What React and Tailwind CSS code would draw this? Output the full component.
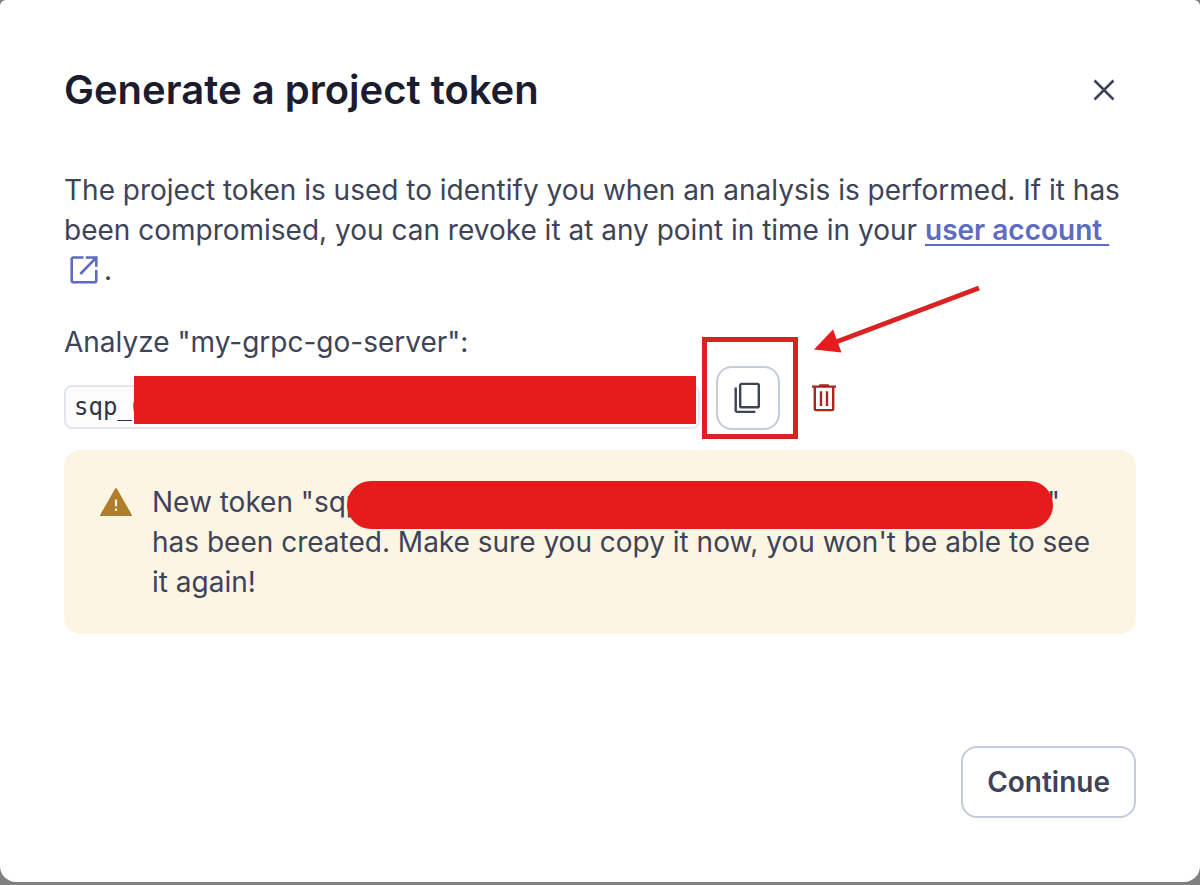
import React, { useState } from "react";

const CloseIcon = () => (
  <svg className="size-8" viewBox="0 0 32 32" fill="none" aria-hidden="true">
    <path d="M6.5 6.5l19 19M25.5 6.5l-19 19" stroke="currentColor" strokeWidth="2.5" />
  </svg>
);

const ExternalIcon = () => (
  <svg
    className="inline-block size-10 align-top"
    viewBox="0 0 40 40"
    fill="none"
    aria-hidden="true"
  >
    <path
      d="M19.5 7.5H9.5a1.8 1.8 0 0 0-1.8 1.8v21.2a1.8 1.8 0 0 0 1.8 1.8h21a1.8 1.8 0 0 0 1.8-1.8V20"
      stroke="currentColor"
      strokeWidth="2.6"
    />
    <path
      d="M21.8 7.5h10.5v9.2M32 7.8L16.3 24"
      stroke="currentColor"
      strokeWidth="2.6"
    />
  </svg>
);

const CopyIcon = () => (
  <svg className="size-8" viewBox="0 0 32 32" fill="none" aria-hidden="true">
    <rect x="8.2" y="1.9" width="18.6" height="23.4" rx="1.4" stroke="currentColor" strokeWidth="2.4" />
    <path
      d="M3.7 5.5v23a1.4 1.4 0 0 0 1.4 1.4h18.2"
      stroke="currentColor"
      strokeWidth="2.4"
    />
  </svg>
);

const TrashIcon = () => (
  <svg className="size-8" viewBox="0 0 32 32" fill="none" aria-hidden="true">
    <path
      d="M4 4.6h24M11.2 3.4h9.6M6.8 4.6v22.2a1.3 1.3 0 0 0 1.3 1.3h15.8a1.3 1.3 0 0 0 1.3-1.3V4.6M13 9.3v14.7M19 9.3v14.7"
      stroke="currentColor"
      strokeWidth="2.4"
    />
  </svg>
);

const WarningIcon = () => (
  <svg className="size-10 shrink-0" viewBox="0 0 40 40" aria-hidden="true">
    <path
      d="M20 7L35 33.2H5Z"
      fill="#b07d2b"
      stroke="#b07d2b"
      strokeWidth="1.8"
      strokeLinejoin="round"
    />
    <path d="M20 17.5v6.8M20 26.6v2.4" stroke="#fcf5e4" strokeWidth="2.2" />
  </svg>
);

const Arrow = () => (
  <svg
    className="absolute left-24 -top-20 w-[172px] h-[72px] pointer-events-none"
    viewBox="0 0 172 72"
    fill="none"
    aria-hidden="true"
  >
    <path d="M167 2L24 56" stroke="#d92323" strokeWidth="4.8" />
    <path d="M2 63.5L21 43.5L29.5 66.5Z" fill="#e61c1c" />
  </svg>
);

const App = () => {
  const [token] = useState("sqp_0");

  return (
    <div className="min-h-screen bg-[#808080] pb-[3px] flex flex-col overflow-x-hidden font-[Inter,sans-serif] text-[28px] leading-[40px] text-[#3e4357]">
      <main className="grow bg-white rounded-t-md rounded-b-2xl p-16 flex flex-col">
        <header className="flex items-center justify-between">
          <h1 className="text-[40px] leading-[52px] font-semibold text-[#1b1d2f]">
            Generate a project token
          </h1>
          <button
            type="button"
            aria-label="Close"
            className="size-16 -my-2 flex items-center justify-center rounded-2xl"
          >
            <CloseIcon />
          </button>
        </header>

        <p className="mt-[54px]">
          The project token is used to identify you when an analysis is
          performed. If it has been compromised, you can revoke it at any point
          in time in your{" "}
          <a href="#account" className="font-semibold text-[#5d6cc0]">
            <span className="underline decoration-2 underline-offset-4">
              user account{"\u00a0"}
            </span>
            <wbr />
            <ExternalIcon />
          </a>
          .
        </p>

        <label htmlFor="token" className="mt-8">
          Analyze "my-grpc-go-server":
        </label>
        <div className="mt-1 flex items-end gap-4">
          <div className="relative grow max-w-[636px] mb-px">
            <input
              id="token"
              type="text"
              readOnly
              value={token}
              className="block w-full h-11 px-2 rounded-lg border-2 border-[#e1e6f0] bg-[#fcfcfd] font-['DejaVu_Sans_Mono',monospace] text-2xl text-[#2f3344]"
            />
            <div className="absolute left-[70px] right-1 -top-[9px] bottom-[5px] bg-[#e61c1c]"></div>
          </div>
          <div className="relative">
            <button
              type="button"
              aria-label="Copy to clipboard"
              className="size-16 flex items-center justify-center rounded-2xl border-2 border-[#c5cbdb]"
            >
              <CopyIcon />
            </button>
            <div className="absolute -left-3.5 -right-[18px] -top-[29px] -bottom-[9px] border-[5px] border-[#d92323] pointer-events-none"></div>
            <Arrow />
          </div>
          <button
            type="button"
            aria-label="Revoke token"
            className="w-14 h-16 flex items-center justify-center text-[#a8261f]"
          >
            <TrashIcon />
          </button>
        </div>

        <div
          role="alert"
          className="mt-5 p-8 flex gap-4 rounded-2xl bg-[#fcf5e4]"
        >
          <WarningIcon />
          <p>
            New token "sqp
            <span className="relative inline-block w-[684px] h-5">
              <span className="absolute -left-4 -right-1.5 -top-[11px] h-12 rounded-full bg-[#e61c1c]"></span>
            </span>
            " has been created. Make sure you copy it now, you won't be able to
            see it again!
          </p>
        </div>

        <footer className="mt-auto pt-16 flex justify-end">
          <button
            type="button"
            className="h-18 px-6 rounded-2xl border-2 border-[#c5cbdb] font-semibold"
          >
            Continue
          </button>
        </footer>
      </main>
    </div>
  );
};

export default App;
